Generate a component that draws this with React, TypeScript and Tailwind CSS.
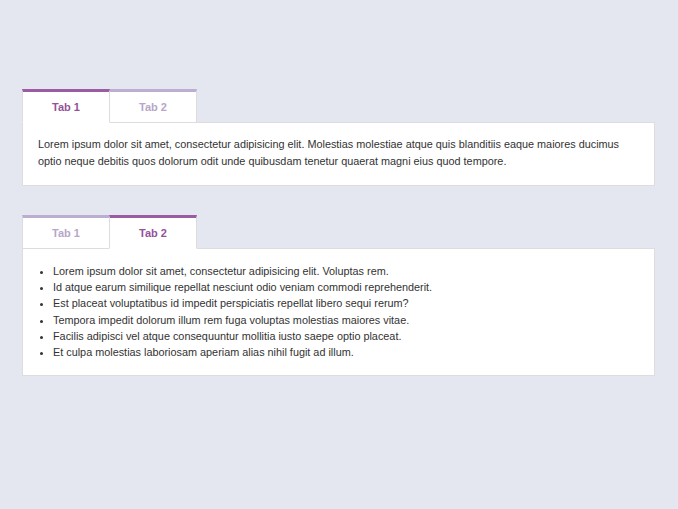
import { useState } from 'react'

const para =
  'Lorem ipsum dolor sit amet, consectetur adipisicing elit. Molestias molestiae atque quis blanditiis eaque maiores ducimus optio neque debitis quos dolorum odit unde quibusdam tenetur quaerat magni eius quod tempore.'

const items = [
  'Lorem ipsum dolor sit amet, consectetur adipisicing elit. Voluptas rem.',
  'Id atque earum similique repellat nesciunt odio veniam commodi reprehenderit.',
  'Est placeat voluptatibus id impedit perspiciatis repellat libero sequi rerum?',
  'Tempora impedit dolorum illum rem fuga voluptas molestias maiores vitae.',
  'Facilis adipisci vel atque consequuntur mollitia iusto saepe optio placeat.',
  'Et culpa molestias laboriosam aperiam alias nihil fugit ad illum.',
]

function Paragraph() {
  return <p className="pt-[13px] pb-[15px] leading-[17px]">{para}</p>
}

function List() {
  return (
    <ul className="list-disc pt-[14px] pb-[15px] pl-[15px] leading-[16.2px]">
      {items.map((t) => (
        <li key={t}>{t}</li>
      ))}
    </ul>
  )
}

function Tabs({ initial }: { initial: number }) {
  const [active, setActive] = useState(initial)
  return (
    <div>
      <div className="flex">
        {[0, 1].map((i) => (
          <button
            key={i}
            onClick={() => setActive(i)}
            className={
              'relative h-[34px] w-[88px] border border-t-[3px] border-[#dddde0] bg-white text-[11px] font-bold ' +
              (i === 1 ? '-ml-px ' : '') +
              (active === i
                ? 'z-10 border-t-[#9c5ca3] border-b-white text-[#94529a]'
                : 'border-t-[#bcaed0] text-[#b7a6c8]')
            }
          >
            Tab {i + 1}
          </button>
        ))}
      </div>
      <div className="-mt-px border border-[#dddde0] bg-white px-[15px] text-[10.85px] text-[#333]">
        {active === 0 ? <Paragraph /> : <List />}
      </div>
    </div>
  )
}

export default function App() {
  return (
    <div
      className="min-h-screen bg-[#e5e7f0] pt-[89px] pr-[23px] pl-[22px]"
      style={{ fontFamily: '"Liberation Sans", Arial, sans-serif' }}
    >
      <Tabs initial={0} />
      <div className="mt-[29px]">
        <Tabs initial={1} />
      </div>
    </div>
  )
}
